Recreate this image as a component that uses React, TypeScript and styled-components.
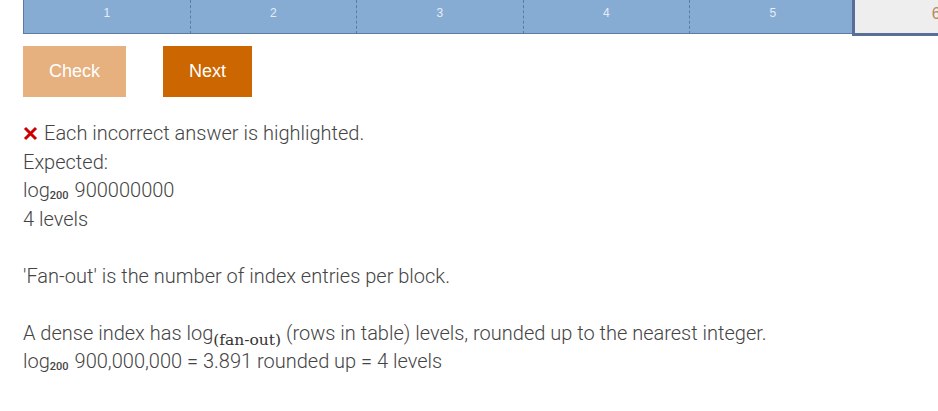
import React from "react";
import styled, { createGlobalStyle } from "styled-components";

const Global = createGlobalStyle`
  html, body { margin: 0; padding: 0; background: #ffffff; overflow: hidden; }
  body { font-family: Roboto, "Noto Sans", sans-serif; }
`;

const Page = styled.div`
  width: 938px;
  height: 411px;
  overflow: hidden;
  padding-left: 23px;
  box-sizing: border-box;
`;

const Bar = styled.div`
  display: flex;
  width: 1700px;
  height: 36px;
  align-items: flex-start;
`;

const Segment = styled.div<{ $first?: boolean; $current?: boolean }>`
  flex: 0 0 auto;
  width: 166.5px;
  box-sizing: border-box;
  height: ${(p) => (p.$current ? "36px" : "34px")};
  margin-left: ${(p) => (p.$current ? "-4px" : "0")};
  background: ${(p) => (p.$current ? "#eeeeee" : "#87acd3")};
  border-bottom: ${(p) => (p.$current ? "3px solid #5a6f96" : "1px solid #5b7ba3")};
  border-left: ${(p) =>
    p.$current ? "3px solid #5a6f96" : p.$first ? "1px solid #5b7ba3" : "1px dashed #5b7ba3"};
  display: flex;
  align-items: flex-start;
  justify-content: center;
  padding-top: ${(p) => (p.$current ? "5px" : "6px")};
  font-family: "Liberation Sans", Arial, sans-serif;
  font-size: ${(p) => (p.$current ? "16px" : "12px")};
  color: ${(p) => (p.$current ? "#b08a5e" : "#e4edf6")};
`;

const Buttons = styled.div`
  display: flex;
  gap: 37px;
  margin-top: 10px;
`;

const Button = styled.button<{ $disabled?: boolean }>`
  height: 51px;
  padding: 0 26px;
  border: none;
  background: ${(p) => (p.$disabled ? "#e6b07f" : "#cc6600")};
  color: #ffffff;
  font-family: "Liberation Sans", Arial, sans-serif;
  font-size: 18px;
  cursor: pointer;
`;

const Feedback = styled.div`
  margin-top: 22px;
  font-family: Roboto, sans-serif;
  font-weight: 300;
  font-size: 20px;
  color: #444444;
  line-height: 28.5px;
`;

const Line = styled.div<{ $gapBefore?: boolean }>`
  margin-top: ${(p) => (p.$gapBefore ? "28.5px" : "0")};
`;

const Cross = styled.svg`
  width: 15px;
  height: 15px;
  margin-right: 6px;
  vertical-align: -1px;
`;

const Sub = styled.span`
  font-size: 11px;
  font-weight: 500;
  line-height: 0;
  position: relative;
  top: 2px;
  margin-right: 6px;
`;

const MathSub = styled.span`
  font-family: "DejaVu Serif", "Liberation Serif", serif;
  font-size: 15.5px;
  font-weight: 400;
  line-height: 0;
  color: #333;
  position: relative;
  top: 5px;
  margin-right: 5px;
`;

export default function App() {
  const segs = [1, 2, 3, 4, 5];
  return (
    <>
      <Global />
      <Page>
        <Bar>
          {segs.map((n) => (
            <Segment key={n} $first={n === 1}>
              {n}
            </Segment>
          ))}
          <Segment $current>6</Segment>
        </Bar>
        <Buttons>
          <Button $disabled>Check</Button>
          <Button>Next</Button>
        </Buttons>
        <Feedback>
          <Line>
            <Cross viewBox="0 0 15 15">
              <path d="M2 2 L13 13 M13 2 L2 13" stroke="#cc0000" strokeWidth="3" />
            </Cross>
            Each incorrect answer is highlighted.
          </Line>
          <Line>Expected:</Line>
          <Line>
            log<Sub>200</Sub>900000000
          </Line>
          <Line>4 levels</Line>
          <Line $gapBefore>'Fan-out' is the number of index entries per block.</Line>
          <Line $gapBefore>
            A dense index has log<MathSub>(fan-out)</MathSub>(rows in table) levels, rounded up to the nearest integer.
          </Line>
          <Line>
            log<Sub>200</Sub>900,000,000 = 3.891 rounded up = 4 levels
          </Line>
        </Feedback>
      </Page>
    </>
  );
}
